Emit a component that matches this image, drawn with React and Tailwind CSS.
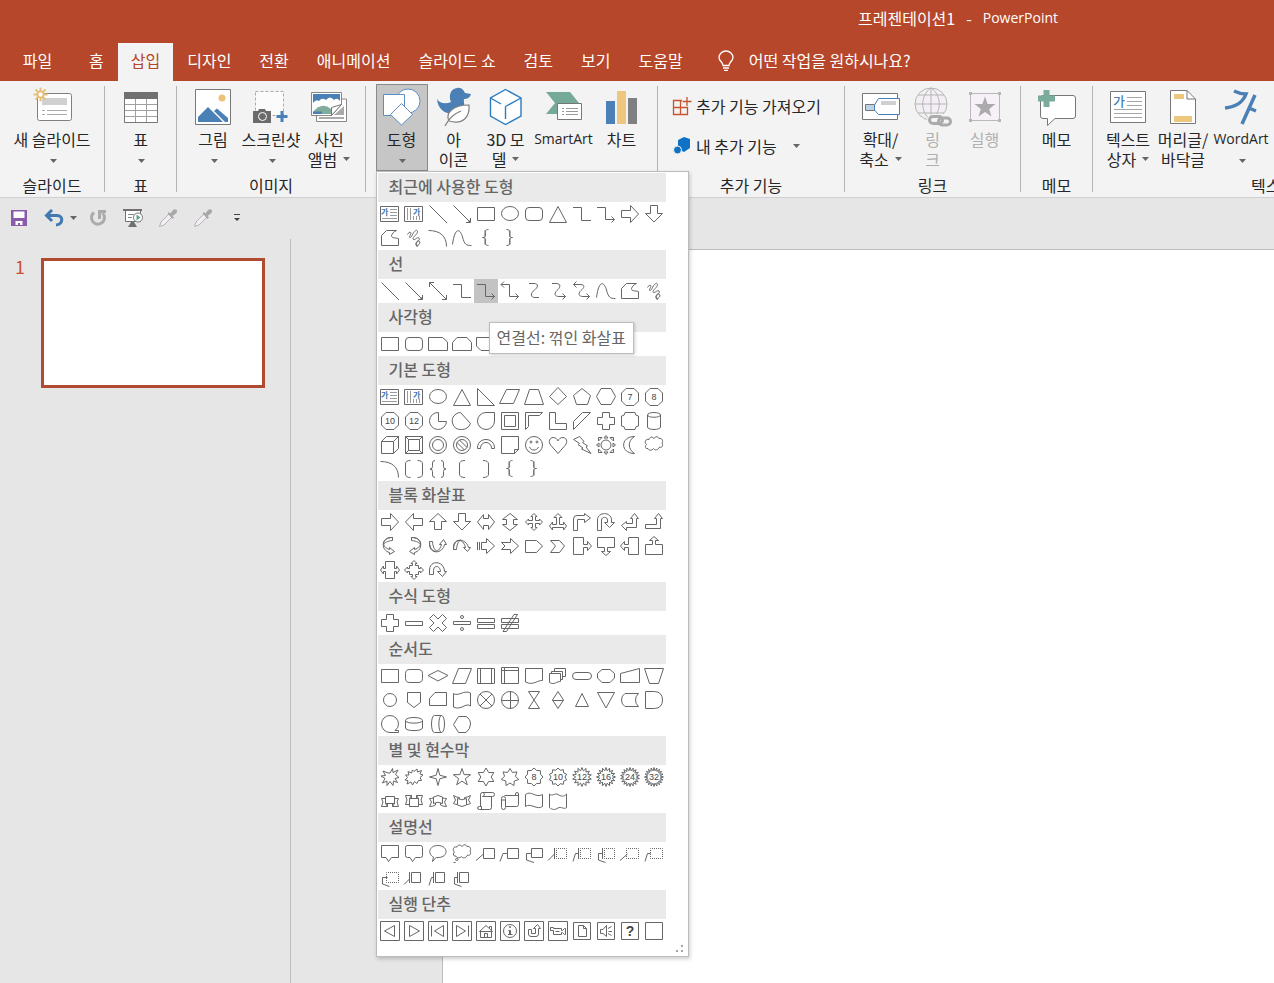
import React from "react";

// builds the outline of an n pointed star
function star(n, outer, inner, cx = 12, cy = 12) {
  const pts = [];
  for (let i = 0; i < n * 2; i++) {
    const r = i % 2 ? inner : outer;
    const a = (Math.PI * i) / n - Math.PI / 2;
    pts.push((cx + r * Math.cos(a)).toFixed(1) + " " + (cy + r * Math.sin(a)).toFixed(1));
  }
  return "M" + pts.join("L") + "Z";
}

const OCTAGON = "M8 3.5H16L20.5 8V16L16 20.5H8L3.5 16V8Z";
const BUTTON = "M2.5 2.5H21.5V21.5H2.5Z";
const BUTTON_SMALL = "M3.5 3.5H20.5V20.5H3.5Z";
const CLOUD = "M6 15.5C3.5 16.5 2.5 13 4.5 11.5C2 9.5 3.5 5.5 7 6.5C7.5 3.5 11 3.5 12 5.5C13.5 3 16.5 3.5 17 5.5C20 4.5 21.5 8 20 10C21.5 12 20 15.5 17.5 14C16 17.5 12.5 17.5 11.5 15.5C9.5 18 6.5 17.5 6 15.5Z";

// every path is drawn in a 24 x 24 cell
const SHAPES = {
  line: "M3.5 3.5L21 21",
  lineArrow: "M3.5 3.5L20.5 20.5M20.5 16V20.5H16M20.5 18L18 20.5",
  lineDouble: "M3.5 3.5L20.5 20.5M20.5 16V20.5H16M3.5 8V3.5H8",
  rect: "M3.5 5.5H20.5V18.5H3.5Z",
  ellipse: "M3.5 11.5A8.5 7 0 0 1 20.5 11.5A8.5 7 0 0 1 3.5 11.5Z",
  round: "M7 5.5H17Q20.5 5.5 20.5 9V15Q20.5 18.5 17 18.5H7Q3.5 18.5 3.5 15V9Q3.5 5.5 7 5.5Z",
  triangle: "M12 4.5L20.5 20.5H3.5Z",
  elbow: "M3 5.5H11.5V18.5H21",
  elbowArrow: "M3 5.5H11.5V17.5H20.5M17.5 14.5L20.5 17.5L17.5 20.5",
  elbowDouble: "M3 5.5H11.5V17.5H20.5M17.5 14.5L20.5 17.5L17.5 20.5M6 2.5L3 5.5L6 8.5",
  curved: "M7 4.5H12C17.5 4.5 15.5 9 12.5 11C8 14.5 8.5 18.5 13 18.5H17",
  curvedArrow: "M6 4.5H10C16 4.5 14 9 11 11.5C7.5 15 9 17.5 13 17.5H19.5M16.5 14.5L19.5 17.5L16.5 20.5",
  curvedDouble: "M3.5 5.5H10C16 5.5 14 9 11 11.5C7.5 15 9 17.5 13 17.5H19.5M16.5 14.5L19.5 17.5L16.5 20.5M6.5 2.5L3.5 5.5L6.5 8.5",
  right: "M3.5 8.5H12.5V3.5L20.5 12L12.5 20.5V15.5H3.5Z",
  left: "M20.5 8.5H11.5V3.5L3.5 12L11.5 20.5V15.5H20.5Z",
  down: "M8.5 3.5H15.5V11.5H20.5L12 20L3.5 11.5H8.5Z",
  up: "M8.5 19.5H15.5V11.5H20.5L12 3.5L3.5 11.5H8.5Z",
  freeform: "M3.5 19.5V9.5L8.5 4.5H18.5C15 6 14.5 7.5 13.5 9.5C13.5 12.5 17 11.5 20.5 12.5V19.5Z",
  scribble: "M5.5 8.5C7 5.5 10 5.500 8.500 8.500C6.500 12 8 13 10 9.500C12 5 15 3 15.500 5.500C15.500 8.500 10.500 11 11 13C12 15.500 15 10.500 17 12C19 14 13 16.500 14 19C16 21 19.500 16.500 17 15C15 14 12.500 17.500 15.500 21",
  arc: "M2.5 4.5C14 4.5 20.5 10 20.5 20.5",
  curve: "M2.5 18.5C4.5 2.5 9.5 1 12.5 11C14.5 18.5 16 19.5 21.5 19.5",
  braceL: "M14.5 3.5C11.5 3.5 11.5 4.5 11.5 7.5S11.5 11.5 8.5 11.5C11.5 11.5 11.5 12.5 11.5 15.5S11.5 19.5 14.5 19.5M11 4.500V10.5M11 12.5V18.500",
  braceR: "M8.5 3.5C11.5 3.5 11.5 4.5 11.5 7.5S11.5 11.5 14.5 11.5C11.5 11.5 11.5 12.5 11.5 15.5S11.5 19.5 8.5 19.5M12 4.500V10.5M12 12.5V18.500",
  snip1: "M2.5 5.5H16.5L21.5 10V18.5H2.5Z",
  snip2: "M2.5 10.5L7 5.5H17L21.5 10.5V18.5H2.5Z",
  snipDiag: "M2.5 5.5H16.5L21.5 10V18.5H7L2.5 14Z",
  rightTri: "M3.5 3.5L20.5 20.5H3.5Z",
  parallelogram: "M8.5 4.5H21.5L15.5 18.5H1.5Z",
  flowData: "M8.5 4.5H21.5L15.5 19.5H2.5Z",
  trapezoid: "M7.5 4.5H16.5L21.5 19.5H2.5Z",
  diamond: "M12 2.5L20.5 11.5L12 19.5L3.5 11.5Z",
  pentagon: "M12 3.5L20.5 10.5L17.5 19.5H6.5L3.5 10.5Z",
  hexagon: "M2.5 11.5L7 3.5H17L21.5 11.5L17 19.5H7Z",
  octagon: OCTAGON,
  pie: "M12.5 3.5A8.5 8.5 0 1 0 20.5 12.5H12.5Z",
  chord: "M10.5 3.500L20.5 14.5Q18 20.5 11.5 20.5A8.5 8.5 0 0 1 6 5Q8 3.500 10.500 3.5Z",
  teardrop: "M3.5 12A8.5 8.5 0 0 1 12 3.5H20.5V12A8.5 8.5 0 0 1 3.5 12Z",
  frame: "M3.5 3.5H20.5V20.5H3.5ZM6.5 6.5H17.5V17.5H6.5Z",
  halfFrame: "M3.5 3.5H20.5L17.5 6.5H6.5V17.5L3.5 20.5Z",
  lShape: "M3.5 3.5H9.5V14.5H20.5V20.5H3.5Z",
  stripe: "M12.5 3.5H20.5L3.5 20.5V12.5Z",
  cross: "M8.5 3.5H15.5V8.5H20.5V15.5H15.5V20.5H8.5V15.5H3.5V8.5H8.5Z",
  plaque: "M7 3.5H17Q17 7 20.5 7V17Q17 17 17 20.5H7Q7 17 3.5 17V7Q7 7 7 3.5Z",
  can: "M5.5 6C5.5 2.7 18.5 2.7 18.5 6V18C18.5 21.3 5.5 21.3 5.5 18ZM5.5 6C5.5 9 18.5 9 18.5 6",
  cube: "M3.5 8.5L8.5 3.5H20.5V15.5L15.5 20.5H3.5ZM3.5 8.5H15.5V20.5M15.5 8.5L20.5 3.5",
  bevel: "M3.5 3.5H20.5V20.5H3.5ZM6.5 6.5H17.5V17.5H6.5ZM3.5 3.5L6.5 6.5M20.5 3.5L17.5 6.5M3.5 20.5L6.5 17.5M20.5 20.5L17.5 17.5",
  donut: "M3.5 12a8.5 8.5 0 1 0 17 0a8.5 8.5 0 1 0 -17 0M6.5 12a5.5 5.5 0 1 0 11 0a5.5 5.5 0 1 0 -11 0",
  noSymbol: "M3.5 12a8.5 8.5 0 1 0 17 0a8.5 8.5 0 1 0 -17 0M6.5 12a5.5 5.5 0 1 0 11 0a5.5 5.5 0 1 0 -11 0M7 9.5L14.5 17M9.5 7L17 14.5",
  blockArc: "M3.5 15.5C3 3.5 21 3.5 20.5 15.5H17.5C17.5 7.5 6.5 7.5 6.5 15.5Z",
  fold: "M3.5 3.5H20.5V16.5L16.5 20.5H3.5ZM16.5 20.5V16.5H20.5",
  smiley: "M3.5 12a8.5 8.5 0 1 0 17 0a8.5 8.5 0 1 0 -17 0M7.5 14C9 18 15 18 16.5 14M8 9a1 1 0 1 0 2 0a1 1 0 1 0 -2 0M14 9a1 1 0 1 0 2 0a1 1 0 1 0 -2 0",
  heart: "M12 20.5L5 12.5C1.5 8.5 4 4.5 7 4.5C9.5 4.5 11.5 6 12 8C12.5 6 14.5 4.5 17 4.5C20 4.5 22.5 8.5 19 12.5Z",
  bolt: "M3.5 6.5L9.5 3.5L14 8.5L12.5 9.5L17.500 13L16 14L21 20.5L11.5 16L13 15L8 11.5L9.5 10.500Z",
  sun: "M7 12a5 5 0 1 0 10 0a5 5 0 1 0 -10 0M12 2.5L14 5H10ZM12 21.5L14 19H10ZM2.5 12L5 10V14ZM21.5 12L19 10V14ZM4.500 4.500H8L4.500 8ZM19.500 4.500V8L16 4.500ZM4.500 19.500V16L8 19.500ZM19.500 19.500H16L19.500 16Z",
  moon: "M16.5 3.5C2 3.5 2 20.5 16.5 20.5C9.5 16 9.5 8 16.5 3.5Z",
  cloud: CLOUD,
  brackets: "M8.5 3.5Q3.5 3.5 3.5 7V17Q3.5 20.5 8.5 20.5M15.5 3.5Q20.5 3.5 20.5 7V17Q20.5 20.5 15.5 20.5",
  braces: "M9 3.5Q6.5 3.5 6.5 6V9.5Q6.5 12 4 12Q6.5 12 6.5 14.5V18Q6.5 20.5 9 20.5M15 3.5Q17.5 3.5 17.5 6V9.5Q17.5 12 20 12Q17.5 12 17.5 14.5V18Q17.5 20.5 15 20.5",
  bracketL: "M15 3.5Q9.5 3.5 9.5 7V17Q9.5 20.5 15 20.5",
  bracketR: "M9 3.5Q14.5 3.5 14.5 7V17Q14.5 20.5 9 20.5",
  leftRight: "M3.5 12L9.5 4.5V8.5H14.5V4.5L20.5 12L14.5 19.5V15.5H9.5V19.5Z",
  upDown: "M12 3.5L19.5 9.5H15.5V14.5H19.5L12 20.5L4.5 14.5H8.5V9.5H4.5Z",
  quad: "M12 3.5L15 6.5H13.5V10.5H17.5V9L20.5 12L17.5 15V13.5H13.5V17.5H15L12 20.5L9 17.5H10.5V13.5H6.5V15L3.5 12L6.5 9V10.5H10.5V6.5H9Z",
  threeWay: "M12 3.5L16 7.5H13.5V14.5H17.5V12L20.5 16L17.5 20V17.5H6.5V20L3.5 16L6.5 12V14.5H10.5V7.5H8Z",
  bent: "M3.5 20.5V9Q3.5 5.5 7 5.5H14.5V3.5L20.5 8L14.5 12.5V9.5H7.5V20.5Z",
  uTurn: "M3.5 20.5V10C3.5 1.5 17.5 1.5 17.5 10V12.5H20.5L15.5 17.5L10.5 12.5H13.5V10C13.5 6.5 7.5 6.5 7.5 10V20.5Z",
  leftUp: "M16.5 3.5L20.5 8.5H18.5V17.5H8.5V20.5L3.5 15.5L8.5 11.5V13.5H14.5V8.5H12.5Z",
  bentUp: "M16.5 3.5L20.5 8.5H18.5V18.5H3.5V14.5H14.5V8.5H12.5Z",
  curveRight: "M14.5 3.5C3.500 4 3 13 11.5 15.5V13.5L16.5 17.5L11.5 20.5V18.5C3 16.5 3 4 12.5 3.5H14.5V6.5C9 7 6.500 9 5.5 10.5",
  curveLeft: "M9.5 3.5C20.500 4 21 13 12.5 15.5V13.5L7.5 17.5L12.5 20.5V18.5C21 16.5 21 4 11.5 3.5H9.5V6.5C15 7 17.500 9 18.5 10.5",
  curveUp: "M3.5 8.5C4 19 13 20.5 15.5 10.5H13.5L17.5 5.5L20.5 10.5H18.5C16.5 20 4 20.5 3.5 10.5V7.5H6.5C7 14 9 16 10.5 17",
  curveDown: "M3.5 15.5C4 4 13 3.5 15.5 13.5H13.5L17.5 17.5L20.5 13.5H18.5C16.5 4.5 4 3.5 3.5 12.5V15.5H6.5C7 9 9 7 10.5 6",
  striped: "M7.5 8.5H12.5V4.5L20.5 12L12.5 19.5V15.5H7.5ZM3.5 8V16M5.5 8V16",
  notched: "M3.5 8.5H12.5V4.5L20.5 12L12.5 19.5V15.5H3.5L7 12Z",
  homePlate: "M3.5 6.5H14.5L20.5 12L14.5 18.5H3.5Z",
  chevron: "M4.5 6.5H13.5L18.5 12L13.5 18.5H4.5L9.5 12Z",
  rightCallout: "M3.5 3.5H13.5V10.5H17.5V7.5L21.5 12L17.5 16.5V13.5H13.5V20.5H3.5Z",
  downCallout: "M3.5 3.5H20.5V13.5H13.5V17.5H16.5L12 21.5L7.5 17.5H10.5V13.5H3.5Z",
  leftCallout: "M20.5 3.5H10.5V10.5H6.5V7.5L2.5 12L6.5 16.5V13.5H10.5V20.5H20.5Z",
  upCallout: "M3.5 20.5H20.5V10.5H13.5V6.5H16.5L12 2.5L7.5 6.5H10.5V10.5H3.5Z",
  lrCallout: "M7.5 3.5H16.5V10.5H18.5V8L21.5 12L18.5 16V13.5H16.5V20.5H7.5V13.5H5.5V16L2.5 12L5.5 8V10.5H7.5Z",
  quadCallout: "M12 2.5L15 5.5H13.5V7.5H16.5V10.5H18.5V9L21.5 12L18.5 15V13.5H16.5V16.5H13.5V18.5H15L12 21.5L9 18.5H10.5V16.5H7.5V13.5H5.5V15L2.5 12L5.5 9V10.5H7.5V7.5H10.5V5.5H9Z",
  circular: "M3.5 16.5V12C3.5 2 18 2 18.5 13.5H20.5L16.5 18.5L11.5 13.5H14.5C14 7 7.5 7 7.5 12.5V16.5Z",
  minus: "M3.5 10.5H20.5V14.5H3.5Z",
  multiply: "M3.5 7.5L7.5 3.5L12 8L16.5 3.5L20.5 7.5L16 12L20.5 16.5L16.5 20.5L12 16L7.5 20.5L3.5 16.5L8 12Z",
  divide: "M3.5 10.5H20.5V13.5H3.5ZM10.5 6a1.5 1.5 0 1 0 3 0a1.5 1.5 0 1 0 -3 0M10.5 18a1.5 1.5 0 1 0 3 0a1.5 1.5 0 1 0 -3 0",
  equal: "M3.5 7.5H20.5V11.5H3.5ZM3.5 13.5H20.5V17.5H3.5Z",
  notEqual: "M3.5 7.5H20.5V11.5H3.5ZM3.5 13.5H20.5V17.5H3.5ZM16 3.5H19.5L8.5 20.5H5Z",
  altProcess: "M8 5.5H16Q20.5 5.5 20.5 9.5V14.5Q20.5 18.5 16 18.5H8Q3.5 18.5 3.5 14.5V9.5Q3.5 5.5 8 5.5Z",
  decision: "M2 11.5L12 6.5L22 11.5L12 17Z",
  predefined: "M3.5 4.5H20.5V19.5H3.5ZM6.5 4.5V19.5M17.5 4.5V19.5",
  storage: "M3.5 3.5H20.5V19.5H3.5ZM6.5 3.5V19.5M3.5 6.5H20.5",
  document: "M3.5 4.5H20.5V16.5C15 16 11.5 22 3.5 18Z",
  multiDoc: "M3.5 9.5H14.5V17.5C11 17 8.5 21.5 3.5 18.5ZM5.5 9.5V7.5H16.5V15.5H14.5M8.5 7.5V4.5H19.5V12.5H16.5",
  terminator: "M6 8.5H18Q21.5 8.5 21.5 12T18 15.5H6Q2.5 15.5 2.5 12T6 8.5Z",
  preparation: "M8 5.5H16L20.5 9.5V14L16 18.5H8L3.5 14V9.5Z",
  manualInput: "M2.5 9.5L21.5 4.5V18.5H2.5Z",
  manualOp: "M2.5 4.5H21.5L16.5 19.5H7.5Z",
  connector: "M5.5 12a6.5 6.5 0 1 0 13 0a6.5 6.5 0 1 0 -13 0",
  offPage: "M5.5 4.5H18.5V14.5L12 19.5L5.5 14.5Z",
  card: "M3.5 10.5L9 4.5H20.5V17.5H3.5Z",
  tape: "M3.5 5.5C8 9 14 1.5 20.5 5V18C16 14 11 23 3.5 19Z",
  sum: "M3.5 12a8.5 8.5 0 1 0 17 0a8.5 8.5 0 1 0 -17 0M6 6L18 18M18 6L6 18",
  or: "M3.5 12a8.5 8.5 0 1 0 17 0a8.5 8.5 0 1 0 -17 0M12.5 3.5V20.5M3.5 12.5H20.5",
  collate: "M6.5 3.5H17.5L6.5 20.5H17.5Z",
  sort: "M12 3.5L17.5 12L12 20.5L6.5 12ZM6.5 12.5H17.5",
  extract: "M12 5.5L18.5 18.5H5.5Z",
  merge: "M3.5 4.5H20.5L12 20Z",
  stored: "M7 5.5H20.5Q17.5 8 17.5 12T20.5 18.5H7Q3.5 16.5 3.5 12T7 5.5Z",
  delay: "M3.5 3.5H12.5Q20.5 4 20.5 12T12.5 20.5H3.5Z",
  sequential: "M20.5 20.500H12A8.5 8.5 0 1 1 20.5 12Q20.5 16 17 18.5H20.5Z",
  disk: "M3.5 8.5C3.5 4.5 20.5 4.5 20.5 8.5V16C20.5 19.5 3.5 19.5 3.5 16ZM3.5 8.5C3.5 12 20.5 12 20.5 8.5",
  direct: "M8.5 3.5H15.5C19.5 3.5 19.5 20.5 15.5 20.5H8.5C4.5 20.5 4.5 3.5 8.5 3.5ZM15.5 3.5C12 3.5 12 20.5 15.5 20.5",
  display: "M8.5 4.5H16Q20.5 7 20.5 12T16 20.5H8.5L3.5 12.5Z",
  burst1: "M12 8L14.5 3.5L15 7.5L20 5L17.5 9.5L21 12.5L17 13.5L19.5 17.5L15.5 16L15 20.5L12 16.5L9 20.5L9 16L4.5 18L7 13.5L3 11L7.5 10.5L5 6L10 8Z",
  burst2: "M12 6.5L15 4L15.5 7L19.5 5.5L18 9L21 10L18 12.5L19.5 15.5L16.5 15.5L15 18.5L12.5 16.5L10.5 20L9 17L5 19L6 15.5L3 15L5.5 12.5L3.5 10L7 10L6 6.5L9.5 8L10.5 5Z",
  star4: star(4, 8.5, 2.5),
  star5: star(5, 9, 3.6, 12, 12.5),
  star6: star(6, 9, 5.2),
  star7: star(7, 9, 5.5, 12, 12.5),
  star8: star(8, 9, 7),
  star10: star(10, 9, 7),
  star12: star(14, 9.5, 6.3),
  star16: star(16, 9.5, 6.3),
  star24: star(18, 9.5, 6.3),
  star32: star(20, 9.5, 6.3),
  ribbonUp: "M7.5 7.5H16.5V14.5H7.5ZM7.5 9.5H3.5L5 13L3.5 17.5H9.5V14.5M16.5 9.5H20.5L19 13L20.5 17.5H14.5V14.5M9.5 17.5L7.5 14.5M14.5 17.5L16.5 14.5",
  ribbonDown: "M7.5 9.5H16.5V17.5H7.5ZM7.5 15.5H3.5L5 11L3.5 6.5H9.5V9.5M16.5 15.5H20.5L19 11L20.5 6.5H14.5V9.5M9.5 6.5L7.5 9.5M14.5 6.5L16.5 9.5",
  curvedRibbonUp: "M7.5 8Q12 5 16.5 8V14.5Q12 12 7.5 14.5ZM7.5 9Q5 9.5 3.5 9.5L5.5 13L3.5 17.5Q7 17.5 9.5 16V14M16.5 9Q19 9.5 20.5 9.5L18.5 13L20.5 17.5Q17 17.5 14.5 16V14",
  curvedRibbonDown: "M7.5 9.5Q12 12 16.5 9.5V16Q12 19 7.5 16ZM7.5 15.5Q5 15.5 3.5 14.5L5.5 11L3.5 6.5Q7 8.5 9.5 8.5V10M16.5 15.5Q19 15.5 20.5 14.5L18.5 11L20.5 6.5Q17 8.5 14.5 8.5V10",
  scrollV: "M6.5 17.5V5.5Q6.5 3.5 8.5 3.5H18.5Q20.5 3.5 20.5 5.5Q20.5 7.5 18.5 7.5H17.5V18.5Q17.5 20.5 15.5 20.5H5.5Q3.5 20.5 3.5 19T5.5 17.5H7.5V20M8.5 3.5Q10.5 4 10.5 5.5T8.5 7.5H18",
  scrollH: "M6.5 6.5H17.5V5Q17.5 3.5 19 3.5T20.5 5V15.5Q20.5 17.5 18.5 17.5H7.5V18.5Q7.5 20.5 5.5 20.5T3.5 18.5V9.5Q3.5 7.5 5.5 7.5T7.5 9.5V17.5M17.5 6.5H20M4 11H7",
  wave: "M3.5 5.5C9 1 14 9.5 20.5 5.5V17.5C15 21.5 9 13.5 3.5 17.5Z",
  doubleWave: "M3.5 5C6 8 9 3.5 12 5.5S18 8 20.5 5V18.5C18 21 15 17 12 19S6 21 3.5 18.5Z",
  calloutRect: "M3.5 3.5H20.5V15.5H13.5L10.5 19.5L8 15.5H3.5Z",
  calloutRound: "M5.5 3.5H18.5Q20.5 3.5 20.5 5.5V13.5Q20.5 15.5 18.5 15.5H13.5L10.5 19.5L8 15.5H5.5Q3.5 15.5 3.5 13.5V5.5Q3.5 3.5 5.5 3.5Z",
  calloutOval: "M6.5 19.5L7.5 15C1.5 12.5 2.5 3.5 12 3.5C22.5 3.5 23 15.5 12 15.5Q10.5 15.5 10 15.5Z",
  calloutCloud: "M6 14C3.5 15 2.5 11.500 4.5 10C2 8 3.5 4 7 5C7.5 2.500 11 2.5 12 4.5C13.5 2 16.5 2.5 17 4.5C20 3.5 21.500 7 20 9C21.5 11 20 14.5 17.5 13C16 16.5 12.5 16.5 11.5 14.5C9.5 16.5 6.5 16 6 14ZM5.500 17.5a1.3 1 0 1 0 2.6 0a1.3 1 0 1 0 -2.6 0M3.5 20.500H5.500",
  callout1: "M2 18.5L9.5 12M9.5 6.5H20.5V16.5H9.5Z",
  callout2: "M2 19.5L5 11.5H9.5M9.5 6.5H20.5V16.5H9.5Z",
  callout3: "M12 20.5L4.5 18V11.5H9.5M9.5 6.5H20.5V15.5H9.5Z",
  accent1: "M2 18.5L7.5 13M7.5 6V17M9.5 6.5H18.5V16.5H9.5Z",
  accent2: "M3 19.5L5.5 11.5H7.5M7.5 6V17M9.5 6.5H18.5V16.5H9.5Z",
  accent3: "M11.5 20.5L4.5 18V11.5H7.5M7.5 6V17M9.5 6.5H18.5V16.5H9.5Z",
  back: BUTTON + "M16.5 6.5V17.5L6.5 12Z",
  next: BUTTON + "M7.5 6.5V17.5L17.5 12Z",
  first: BUTTON + "M17.5 6.5V17.5L8.5 12ZM5.5 6.5V17.5",
  last: BUTTON + "M6.5 6.5V17.5L15.5 12ZM18.5 6.5V17.5",
  home: BUTTON + "M5.5 12.5L12 6.5L18.5 12.5ZM6.5 12.5V18.5H17.5V12.5M15.5 9V7.5H17.5V11M10.5 18.5V14.5H13.5V18.5",
  info: BUTTON + "M5.5 12a6.5 6.5 0 1 0 13 0a6.5 6.5 0 1 0 -13 0M10.5 11.5H12.5V15.5M10 15.5H14.5M11.5 7.5H12.5V8.5H11.5ZM11.5 11.5V15.5",
  goBack: BUTTON + "M6.5 10.5V15Q6.5 17.5 9 17.5H14Q16.5 17.5 16.5 15V9.5H18.5L15.5 5.5L11.5 9.5H13.5V14.5H9.5V10.5Z",
  movie: BUTTON + "M4.5 8.5H7.5V9.5H15.5V11.500H16.500L18.5 9.5H19.5V15.5H18.5L16.500 13.500H15.5V15.5H7.5V11.5H4.5ZM9.500 12.500H13.500",
  doc: BUTTON_SMALL + "M8.5 6.5H13.5L16.5 9.5V17.5H8.5ZM13.5 6.5V9.5H16.5",
  sound: BUTTON_SMALL + "M6.5 10.5H9L12.5 6.5V17.5L9 14.5H6.5ZM14 9.5L17.5 7.5M14.5 12.500H18M14 14.5L17.5 16.5",
  blank: BUTTON_SMALL,
  help: BUTTON_SMALL,
};

// the callouts whose box has a dotted border: [solid part, dotted part]
const DOTTED = {
  accentDot1: ["M2 18.5L8.5 12M8.5 6V17", "M10.5 6.5H20.5V16.5H10.5Z"],
  accentDot2: ["M3 19.5L5.5 11.5H8.5M8.5 6V17", "M10.5 6.5H20.5V16.5H10.5Z"],
  accentDot3: ["M11.5 20.5L4.5 18V11.5H8.5M8.5 6V17", "M10.5 6.5H20.5V16.5H10.5Z"],
  dot1: ["M2 18.5L9.5 12", "M8.5 6.5H20.5V16.5H8.5Z"],
  dot2: ["M3 19.5L5.5 11.5H8.5", "M8.5 6.5H20.5V16.5H8.5Z"],
  dot3: ["M11.5 20.5L4.5 18V11.5H9.5", "M8.5 6.5H20.5V16.5H8.5Z"],
};

// "shape:label" puts a small label inside the shape
const SECTIONS = [
  { title: "최근에 사용한 도형", items: "textBox textBoxV line lineArrow rect ellipse round triangle elbow elbowArrow right down freeform scribble arc curve braceL braceR" },
  { title: "선", items: "line lineArrow lineDouble elbow elbowArrow elbowDouble curved curvedArrow curvedDouble curve freeform scribble", active: 4 },
  { title: "사각형", items: "rect round snip1 snip2 snipDiag snip1 round snip2 snipDiag" },
  { title: "기본 도형", items: "textBox textBoxV ellipse triangle rightTri parallelogram trapezoid diamond pentagon hexagon octagon:7 octagon:8 octagon:10 octagon:12 pie chord teardrop frame halfFrame lShape stripe cross plaque can cube bevel donut noSymbol blockArc fold smiley heart bolt sun moon cloud arc brackets braces bracketL bracketR braceL braceR" },
  { title: "블록 화살표", items: "right left up down leftRight upDown quad threeWay bent uTurn leftUp bentUp curveRight curveLeft curveUp curveDown striped notched homePlate chevron rightCallout downCallout leftCallout upCallout lrCallout quadCallout circular" },
  { title: "수식 도형", items: "cross minus multiply divide equal notEqual" },
  { title: "순서도", items: "rect altProcess decision flowData predefined storage document multiDoc terminator preparation manualInput manualOp connector offPage card tape sum or collate sort extract merge stored delay sequential disk direct display" },
  { title: "별 및 현수막", items: "burst1 burst2 star4 star5 star6 star7 star8:8 star10:10 star12:12 star16:16 star24:24 star32:32 ribbonUp ribbonDown curvedRibbonUp curvedRibbonDown scrollV scrollH wave doubleWave" },
  { title: "설명선", items: "calloutRect calloutRound calloutOval calloutCloud callout1 callout2 callout3 accentDot1 accentDot2 accentDot3 dot1 dot2 dot3 accent1 accent2 accent3" },
  { title: "실행 단추", items: "back next first last home info goBack movie doc sound help:? blank" },
];

function ShapeIcon({ item }) {
  const [name, label] = item.split(":");
  if (name === "textBox" || name === "textBoxV") {
    const vertical = name === "textBoxV";
    return (
      <svg viewBox="0 0 24 24" className="size-6" fill="none">
        <path d="M2.5 4.5H20.5V19.5H2.5Z" stroke="#6a6a6a" />
        <path
          d={vertical ? "M5.5 6V18M8.5 6V18M11.5 14V18M14.5 14V18M17.5 14V18" : "M12 7.5H19M12 10.5H19M12 13.5H19M4 16.5H19"}
          stroke="#9a9a9a"
        />
        <text x={vertical ? 11 : 3} y="13" fontSize="8" fontWeight="700" fill="#3b76b0">가</text>
      </svg>
    );
  }
  if (DOTTED[name]) {
    return (
      <svg viewBox="0 0 24 24" className="size-6" fill="none" stroke="#666">
        <path d={DOTTED[name][0]} />
        <path d={DOTTED[name][1]} strokeDasharray="1 1" strokeDashoffset="0.5" />
      </svg>
    );
  }
  const big = label === "?";
  return (
    <svg viewBox="0 0 24 24" className="size-6" fill="none" stroke="#666">
      <path d={SHAPES[name]} />
      {label && (
        <text
          x="12"
          y={big ? 17 : 15}
          textAnchor="middle"
          fontSize={big ? 14 : 9}
          fontWeight={big ? 700 : 400}
          fill="#444"
          stroke="none"
          fontFamily="Liberation Sans Narrow, Liberation Sans, sans-serif"
        >
          {label}
        </text>
      )}
    </svg>
  );
}

function ShapeMenu() {
  return (
    <div className="absolute left-0 top-full z-10 w-[313px] border border-[#bcbcbc] bg-white pt-px pl-px pb-[13px] shadow-[1px_2px_4px_rgba(0,0,0,0.2)]">
      {SECTIONS.map((section) => (
        <section key={section.title} className="w-[288px]">
          <h3 className="h-[29px] bg-[#eaeaea] pl-[11px] text-base leading-[26px] font-medium text-[#666]">{section.title}</h3>
          <div className="grid grid-cols-12">
            {section.items.split(" ").map((item, i) => (
              <div key={i} className="relative h-6">
                <button aria-label={item} className={section.active === i ? "block size-6 bg-[#c3c3c3]" : "block size-6"}>
                  <ShapeIcon item={item} />
                </button>
                {section.active === i && (
                  <div role="tooltip" className="absolute left-[15px] top-[43px] z-20 h-8 border border-[#bdbdbd] bg-white px-[7px] text-base leading-[28px] whitespace-nowrap text-[#666] shadow-[1px_1px_3px_rgba(0,0,0,0.2)]">
                    연결선: 꺾인 화살표
                  </div>
                )}
              </div>
            ))}
          </div>
        </section>
      ))}
      <svg viewBox="0 0 8 8" className="absolute right-1 bottom-[3px] size-2" fill="#a5a5a5">
        <path d="M5 0h2v2h-2zM0 5h2v2h-2zM5 5h2v2h-2z" />
      </svg>
    </div>
  );
}

function Caret({ className = "" }) {
  return (
    <svg viewBox="0 0 7 4" className={"inline-block h-1 w-[7px] " + className} fill="#666">
      <path d="M0 0H7L3.5 4Z" />
    </svg>
  );
}

/* ---- ribbon icons ---- */

const NewSlideIcon = () => (
  <svg viewBox="0 0 40 40" className="size-10" fill="none">
    <rect x="5.5" y="6.5" width="34" height="27" rx="2" fill="#fff" stroke="#808080" />
    <path d="M10 11H35V18H10Z" fill="#d0d0d0" />
    <path d="M10 23.5H13M15 23.5H35M10 27.5H13M15 27.5H35" stroke="#aaa" />
    <path d="M8.5 0.5V5M8.5 10V14.5M1.5 7.5H6M11 7.5H15.5M3.5 2.5L6.5 5.5M10.5 9.5L13.5 12.5M13.5 2.5L10.5 5.5M3.5 12.5L6.5 9.5" stroke="#e6c07a" strokeWidth="2" />
    <circle cx="8.5" cy="7.5" r="3" fill="#fff" stroke="#e6b96a" strokeWidth="1.5" />
  </svg>
);

const TableIcon = () => (
  <svg viewBox="0 0 36 36" className="size-9" fill="none">
    <path d="M1.5 3.5H34.5V33.5H1.5Z" fill="#fff" stroke="#777" />
    <path d="M1 3H35V10H1Z" fill="#707070" />
    <path d="M12.5 10V33M23.5 10V33M2 15.5H34M2 21.5H34M2 27.5H34" stroke="#a0a0a0" />
  </svg>
);

const PictureIcon = () => (
  <svg viewBox="0 0 36 36" className="size-9" fill="none">
    <path d="M0.5 0.5H35.5V35.5H0.5Z" fill="#fff" stroke="#777" />
    <circle cx="27" cy="9" r="3.5" fill="#ebc277" />
    <path d="M3 33V28L13 18L28 33Z" fill="#4a80b6" />
    <path d="M19 22L22 19.5L33 29V33H30Z" fill="#4a80b6" />
  </svg>
);

const ScreenshotIcon = () => (
  <svg viewBox="0 0 36 36" className="size-9" fill="none">
    <path d="M2.5 2.5H30.5V26.5H2.5Z" fill="#fbfbfb" stroke="#aaa" strokeDasharray="3 2" />
    <path d="M0 22H5L6 20H12L13 22H18V34H0Z" fill="#6b6b6b" />
    <circle cx="9.5" cy="27.5" r="4" stroke="#fff" />
    <path d="M29 22V33M23.5 27.5H34.5" stroke="#4a80b6" strokeWidth="3" />
  </svg>
);

const AlbumIcon = () => (
  <svg viewBox="0 0 38 36" className="h-9 w-[38px]" fill="none">
    <path d="M6.5 10H36.5V32.5H6.5Z" fill="#fff" stroke="#888" />
    <path d="M9 28H34V30H9ZM24 26L34 17V26Z" fill="#aaa" />
    <path d="M1.5 3.5H31.5V15.5L21.5 26.5H1.5Z" fill="#fff" stroke="#888" />
    <path d="M3 5H30V12Q27 8 24 11Q20 6 16 11Q12 8 9 12Q6 10 3 14Z" fill="#4a80b6" />
    <path d="M3 23Q12 12 21 20V25H3Z" fill="#7fac9b" />
    <path d="M3 22.5H12V25H3Z" fill="#4a80b6" />
    <path d="M21.5 26.5V18.5L31.5 15.5Z" fill="#fff" stroke="#777" />
  </svg>
);

const ShapesIcon = () => (
  <svg viewBox="0 0 38 38" className="size-[38px]" fill="#fff" stroke="#5b8fc3">
    <circle cx="25" cy="13" r="12" />
    <path d="M0.5 6.5H21.5V27.5H0.5Z" />
    <path d="M18.5 15.5L29.5 26.5L18.5 37L7.5 26.5Z" />
  </svg>
);

const DuckIcon = () => (
  <svg viewBox="0 0 36 40" className="h-10 w-9">
    <path d="M1 12C4 17 10 17 15 15C13 11 13 2 21 1C26 0 28 4 29 6L35 7C34 11 31 12 28 12C27 17 31 19 24 24C16 30 2 26 1 12Z" fill="#4a80b6" />
    <path d="M13 34C9 26 17 18 33 18C34 30 27 38 13 34Z" fill="#fff" stroke="#808080" strokeWidth="1.2" />
    <path d="M9 39C14 30 18 27 25 24" fill="none" stroke="#808080" strokeWidth="1.2" />
  </svg>
);

const CubeIcon = () => (
  <svg viewBox="0 0 34 38" className="h-[38px] w-[34px]" fill="#fff" stroke="#2b7cc0" strokeWidth="1.4">
    <path d="M16.5 1.5L32 10V28L16.5 36.5L1.5 28V10Z" />
    <path d="M16.5 18.5L32 10M16.5 18.5V31M1.5 10L12 16" />
  </svg>
);

const SmartArtIcon = () => (
  <svg viewBox="0 0 38 32" className="h-8 w-[38px]" fill="none">
    <path d="M1 1H25L34 12H24V23H1L10 12Z" fill="#74aa97" />
    <path d="M12.5 12.5H36.5V28.5H12.5Z" fill="#fff" stroke="#777" />
    <path d="M17 17.5H19M21 17.5H33M17 20.5H19M21 20.5H33M17 23.5H19M21 23.5H33" stroke="#999" />
  </svg>
);

const ChartIcon = () => (
  <svg viewBox="0 0 32 36" className="h-9 w-8">
    <path d="M0 12H9V35H0Z" fill="#4a80b6" />
    <path d="M11 2H20V35H11Z" fill="#eec77e" />
    <path d="M22 9H31V35H22Z" fill="#808080" />
  </svg>
);

const ZoomIcon = () => (
  <svg viewBox="0 0 38 30" className="h-[30px] w-[38px]" fill="#fff">
    <path d="M0.5 1.5H35.5V27.5H0.5Z" stroke="#777" />
    <path d="M3.5 12.5H12.5V18.5H3.5Z" fill="#bcd3e6" stroke="#777" />
    <path d="M12.5 13L16.5 6.5H37.5V22.5H16.5L12.5 18Z" stroke="#4a80b6" />
    <path d="M19 9H34V13H19Z" fill="#d0d0d0" />
  </svg>
);

const GlobeIcon = () => (
  <svg viewBox="0 0 38 40" className="h-10 w-[38px]" fill="none">
    <circle cx="17" cy="17" r="16" fill="#f4eff5" stroke="#b5b5b5" />
    <path d="M17 1V33M1 17H33M4 8H30M4 26H30M17 1C6 8 6 26 17 33M17 1C28 8 28 26 17 33" stroke="#b5b5b5" />
    <rect x="13" y="27" width="25" height="13" rx="6" fill="#f3f3f3" />
    <g stroke="#ababab" strokeWidth="3">
      <rect x="15.5" y="29.5" width="13" height="7" rx="3.5" />
      <rect x="24.5" y="31" width="12" height="7" rx="3.5" />
    </g>
  </svg>
);

const ActionIcon = () => (
  <svg viewBox="0 0 34 32" className="h-8 w-[34px]" fill="none">
    <path d="M2.5 2.5H31.5V29.5H2.5Z" fill="#f6f0f7" stroke="#bdb6be" />
    <path d={star(5, 11, 4.4, 17, 16.5)} fill="#ababab" />
    <path d="M1 1H4V4H1ZM30 1H33V4H30ZM1 28H4V31H1ZM30 28H33V31H30Z" fill="#b5b5b5" />
  </svg>
);

const MemoIcon = () => (
  <svg viewBox="0 0 40 38" className="h-[38px] w-10">
    <path d="M6 7.5H36Q38.5 7.5 38.5 10V28Q38.5 30.5 36 30.5H18L10.5 37.5V30.5H6Q3.5 30.5 3.5 28V10Q3.5 7.5 6 7.5Z" fill="#fff" stroke="#777" />
    <path d="M6.5 2H12.5V7.5H18V13.5H12.5V19H6.5V13.5H1V7.5H6.5Z" fill="#7bab9a" />
  </svg>
);

const TextBoxIcon = () => (
  <svg viewBox="0 0 36 32" className="h-8 w-9">
    <path d="M0.5 0.5H35.5V31.5H0.5Z" fill="#fff" stroke="#777" />
    <path d="M17 6.5H32M17 10.5H32M17 14.5H32M4 18.5H32M4 22.5H32M4 26.5H32" stroke="#a5a5a5" />
    <text x="3" y="15" fontSize="13" fontWeight="500" fill="#4a80b6">가</text>
  </svg>
);

const HeaderIcon = () => (
  <svg viewBox="0 0 26 36" className="h-9 w-[26px]">
    <path d="M0.5 1.5H17L25.5 10V34.5H0.5Z" fill="#fff" stroke="#777" />
    <path d="M17 1.5V10H25" fill="none" stroke="#777" />
    <path d="M4 5H14V10H4ZM4 27H22V33H4Z" fill="#eec77e" />
  </svg>
);

const WordArtIcon = () => (
  <svg viewBox="0 0 34 38" className="h-[38px] w-[34px]" fill="none" stroke="#4a80b6" strokeWidth="3.5">
    <path d="M10 3C14 5 18 6 22 6C19 14 11 19 1 20" />
    <path d="M31 7L18 36M25 20L32 23" />
  </svg>
);

const AddInIcon = () => (
  <svg viewBox="0 0 20 20" className="size-5" fill="none" stroke="#c8532f" strokeWidth="1.3">
    <path d="M10 4.5H1.5V18.5H15.5V11.5H1.5M8.5 4.5V18.5M15 1V10M10.5 5.5H19.5" />
  </svg>
);

const MyAddInIcon = () => (
  <svg viewBox="0 0 20 20" className="size-5" fill="#0f72c6">
    <path d="M12 1L18 3V12L12 16L6 13V4Z" />
    <circle cx="5.500" cy="14" r="4" stroke="#f3f3f3" />
  </svg>
);

/* ---- ribbon layout ---- */

function RibbonButton({ icon, lines, caret, width, disabled, open, latin }) {
  return (
    <button
      disabled={disabled}
      className={
        "flex h-[87px] shrink-0 flex-col items-center leading-5 whitespace-nowrap " +
        width +
        (latin ? " font-['Open_Sans',sans-serif] text-sm leading-5" : " text-base leading-5") +
        (open ? " bg-[#c6c6c6] outline outline-1 -outline-offset-1 outline-[#8a8a8a]" : "") +
        (disabled ? " text-[#b0b0b0]" : " text-[#262626]")
      }
    >
      <span className="flex h-[45px] items-end justify-center"><span className="flex h-[45px] items-center">{icon}</span></span>
      {lines.map((line, i) => (
        <span key={line} className="flex h-5 items-center">
          {line}
          {caret && i === 1 && <Caret className="ml-[6px]" />}
        </span>
      ))}
      {caret && lines.length === 1 && <Caret className="mt-[10px] ml-[2px]" />}
    </button>
  );
}

function Group({ label, width, children }) {
  return (
    <div className={"flex shrink-0 flex-col pt-[3px] " + width}>
      <div className="flex h-[91px] justify-center">{children}</div>
      {label && <div className="text-center text-base leading-5 text-[#262626]">{label}</div>}
    </div>
  );
}

function Divider() {
  return <div className="mt-[5px] h-[106px] w-px shrink-0 bg-[#b4b4b4]" />;
}

const TABS = ["디자인", "전환", "애니메이션", "슬라이드 쇼", "검토", "보기", "도움말"];

function Ribbon() {
  return (
    <div className="flex h-[117px] border-b border-[#d0d0d0] bg-[#f3f3f3]">
      <Group label="슬라이드" width="w-[104px]">
        <RibbonButton width="w-[84px]" icon={<NewSlideIcon />} lines={["새 슬라이드"]} caret />
      </Group>
      <Divider />
      <Group label="표" width="w-[71px]">
        <RibbonButton width="w-[52px]" icon={<TableIcon />} lines={["표"]} caret />
      </Group>
      <Divider />
      <Group label="이미지" width="w-[188px]">
        <RibbonButton width="w-[52px]" icon={<PictureIcon />} lines={["그림"]} caret />
        <RibbonButton width="w-[64px]" icon={<ScreenshotIcon />} lines={["스크린샷"]} caret />
        <RibbonButton width="w-[52px]" icon={<AlbumIcon />} lines={["사진", "앨범"]} caret />
      </Group>
      <Divider />
      <Group width="w-[291px]">
        <div className="relative h-[87px]">
          <RibbonButton width="w-[52px]" icon={<ShapesIcon />} lines={["도형"]} caret open />
          <ShapeMenu />
        </div>
        <RibbonButton width="w-[52px]" icon={<DuckIcon />} lines={["아", "이콘"]} />
        <RibbonButton width="w-[52px]" icon={<CubeIcon />} lines={["3D 모", "델"]} caret />
        <RibbonButton width="w-[64px]" icon={<SmartArtIcon />} lines={["SmartArt"]} latin />
        <RibbonButton width="w-[52px]" icon={<ChartIcon />} lines={["차트"]} />
      </Group>
      <Divider />
      <Group label="추가 기능" width="w-[186px]">
        <div className="flex w-full flex-col pt-[2px] pl-[14px] text-base text-[#262626]">
          <button className="flex h-10 items-center gap-1 whitespace-nowrap"><AddInIcon />추가 기능 가져오기</button>
          <button className="flex h-10 items-center gap-1 whitespace-nowrap"><MyAddInIcon />내 추가 기능<Caret className="ml-3" /></button>
        </div>
      </Group>
      <Divider />
      <Group label="링크" width="w-[175px]">
        <RibbonButton width="w-[52px]" icon={<ZoomIcon />} lines={["확대/", "축소"]} caret />
        <RibbonButton width="w-[52px]" icon={<GlobeIcon />} lines={["링", "크"]} disabled />
        <RibbonButton width="w-[52px]" icon={<ActionIcon />} lines={["실행"]} disabled />
      </Group>
      <Divider />
      <Group label="메모" width="w-[71px]">
        <RibbonButton width="w-[52px]" icon={<MemoIcon />} lines={["메모"]} />
      </Group>
      <Divider />
      <Group label="텍스트" width="w-[360px]">
        <div className="flex w-full pl-[8px]">
          <RibbonButton width="w-[54px]" icon={<TextBoxIcon />} lines={["텍스트", "상자"]} caret />
          <RibbonButton width="w-[56px]" icon={<HeaderIcon />} lines={["머리글/", "바닥글"]} />
          <RibbonButton width="w-[60px]" icon={<WordArtIcon />} lines={["WordArt"]} caret latin />
        </div>
      </Group>
    </div>
  );
}

const Eyedropper = () => (
  <svg viewBox="0 0 20 20" className="size-5" fill="none">
    <path d="M1.5 18.5L3 14L11 6L14 9L6 17Z" fill="#f4eef5" stroke="#b3b3b3" />
    <path d="M9.5 5.5L11 4L12.5 5.5L15 2Q17 0.5 18.5 1.8T18 5.5L14.5 8L16 9.5L14.5 11Z" fill="#a8a8a8" />
  </svg>
);

function QuickAccess() {
  return (
    <div className="flex h-[41px] items-center pb-[2px] pl-[10px]">
      <button aria-label="저장">
        <svg viewBox="0 0 18 18" className="size-[18px]">
          <path d="M1 1H17V17H1Z" fill="#8a5bab" />
          <path d="M3.5 2.5H14.5V9H3.5ZM5.5 12H12.5V16H10V14H8V16H5.5Z" fill="#fff" />
        </svg>
      </button>
      <button aria-label="실행 취소" className="ml-4 flex items-center gap-[6px]">
        <svg viewBox="0 0 20 18" className="h-[18px] w-5" fill="none" stroke="#4279b3" strokeWidth="3">
          <path d="M8 1L2.5 6.5L8 12M3 6.5H13C20 7 19 15 12 16" />
        </svg>
        <Caret />
      </button>
      <button aria-label="다시 실행" className="ml-3">
        <svg viewBox="0 0 18 18" className="size-[18px]" fill="none" stroke="#ababab" strokeWidth="3">
          <path d="M5 3.5A6.5 6.500 0 1 0 13.5 4M10.5 10V2.5H17" />
        </svg>
      </button>
      <button aria-label="슬라이드 쇼" className="ml-4">
        <svg viewBox="0 0 20 20" className="size-5" fill="none">
          <path d="M2.5 3V13.5H17.5V3" fill="#fff" stroke="#707070" />
          <path d="M0 1H19V3H0ZM8 14H11L14 19H5Z" fill="#707070" />
          <path d="M5 6.5H11M5 9.5H9" stroke="#888" />
          <circle cx="15" cy="9.5" r="4.5" fill="#fff" stroke="#777" />
          <path d="M13.5 6.5L17.5 9.5L13.5 12.5Z" fill="#5ca487" />
        </svg>
      </button>
      <button aria-label="스포이트" className="ml-[15px]"><Eyedropper /></button>
      <button aria-label="윤곽선 스포이트" className="ml-[15px]"><Eyedropper /></button>
      <button aria-label="사용자 지정" className="ml-[21px]">
        <svg viewBox="0 0 6 8" className="h-2 w-[6px]" fill="#444">
          <path d="M0 0H6V1H0ZM0 4H6L3 7Z" />
        </svg>
      </button>
    </div>
  );
}

export default function App() {
  return (
    <div className="flex min-h-screen flex-col overflow-hidden bg-[#e6e6e6] font-['Noto_Sans_CJK_KR','Noto_Sans',sans-serif]">
      <header className="bg-[#b7472a] text-base text-white">
        <div className="flex h-[43px] items-center gap-[11px] pb-2 pl-[858px] whitespace-nowrap">
          <span>프레젠테이션1</span>
          <span>-</span>
          <span className="font-['Open_Sans',sans-serif] text-sm">PowerPoint</span>
        </div>
        <nav className="flex h-[38px] items-stretch whitespace-nowrap">
          <button className="w-[75px] pb-1">파일</button>
          <button className="px-[14px] pb-1">홈</button>
          <button className="bg-[#f3f3f3] px-[13px] pb-1 text-[#b7472a]">삽입</button>
          {TABS.map((tab) => (
            <button key={tab} className="px-[14px] pb-1">{tab}</button>
          ))}
          <button className="ml-5 flex items-center gap-[14px] pb-1">
            <svg viewBox="0 0 18 22" className="h-[22px] w-[18px]" fill="none" stroke="#fff" strokeWidth="1.3">
              <path d="M6 16.5C6 13 2 12 2 8.5A7 6.5 0 0 1 16 8.5C16 12 12 13 12 16.5ZM6 19H12M7 21.5H11" />
            </svg>
            어떤 작업을 원하시나요?
          </button>
        </nav>
      </header>
      <Ribbon />
      <QuickAccess />
      <main className="flex flex-1">
        <aside className="flex w-[291px] shrink-0 items-start border-r border-[#bdbdbd] pt-[19px] pl-[15px]">
          <span className="w-[26px] text-lg leading-4 text-[#c8502f]">1</span>
          <div className="h-[130px] w-[224px] border-3 border-[#b04a30] bg-white" />
        </aside>
        <div className="flex flex-1 pt-[10px] pl-[151px]">
          <div className="flex-1 border-t border-l border-[#bdbdbd] bg-white" />
        </div>
      </main>
    </div>
  );
}
